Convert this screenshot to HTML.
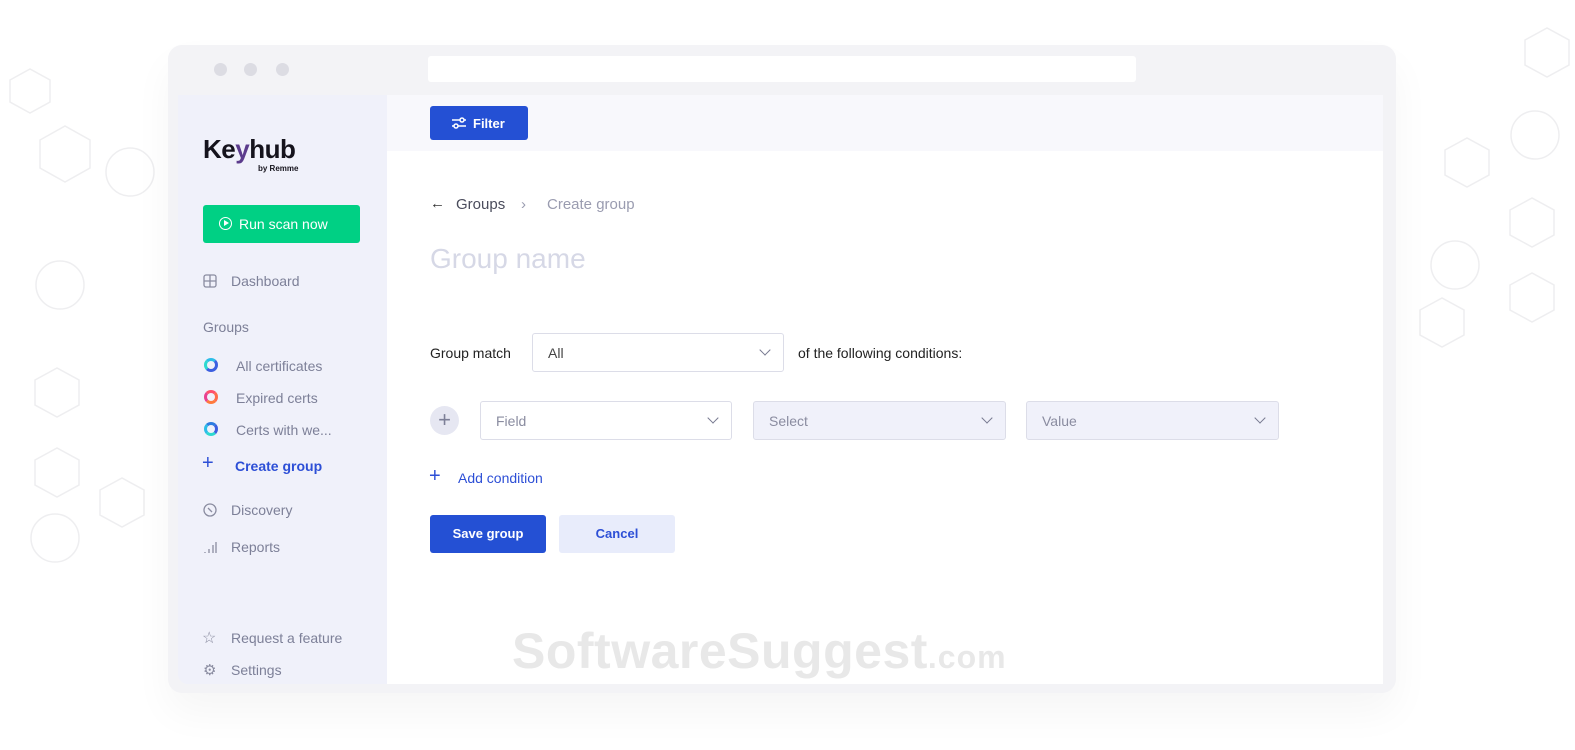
<!DOCTYPE html><html><head><style>
*{margin:0;padding:0;box-sizing:border-box}
body{width:1575px;height:750px;background:#fff;font-family:"Liberation Sans",sans-serif;position:relative;overflow:hidden}
.a{position:absolute}
.frame{left:168px;top:45px;width:1228px;height:648px;background:#f3f3f6;border-radius:14px;box-shadow:0 20px 40px rgba(0,0,0,0.04)}
.dot{width:13px;height:13px;border-radius:50%;background:#dcdce3;top:63px}
.side{left:178px;top:95px;width:209px;height:589px;background:#f0f1fa;border-radius:0 0 0 10px}
.top{left:387px;top:95px;width:996px;height:56px;background:#f8f8fc}
.main{left:387px;top:151px;width:996px;height:533px;background:#fff}
.nav{font-size:14px;color:#7d8098}
.sel{height:39px;border:1px solid #dcdde8;border-radius:3px;font-size:14px;color:#8a8ca0;padding:11px 15px}
.sel.g{background:#f0f1fa}
.chev{position:absolute;right:14px;top:12px;width:8px;height:8px;border-right:1.5px solid #777a90;border-bottom:1.5px solid #777a90;transform:rotate(45deg)}
.ring{width:14px;height:14px;border-radius:50%;border:3px solid}
</style></head><body>
<svg class="a" style="left:0;top:40px" width="170" height="530" fill="none" stroke="#eeeef0" stroke-width="1.5"><circle cx="130" cy="132" r="24"/><circle cx="60" cy="245" r="24"/><circle cx="55" cy="498" r="24"/><path d="M40 100l25-14 25 14v28l-25 14-25-14z M10 40l20-11 20 11v22l-20 11-20-11z M35 340l22-12 22 12v25l-22 12-22-12z M35 420l22-12 22 12v25l-22 12-22-12z M100 450l22-12 22 12v25l-22 12-22-12z"/></svg>
<svg class="a" style="left:1400px;top:20px" width="175" height="380" fill="none" stroke="#eeeef0" stroke-width="1.5"><circle cx="135" cy="115" r="24"/><circle cx="55" cy="245" r="24"/><path d="M125 20l22-12 22 12v25l-22 12-22-12z M45 130l22-12 22 12v25l-22 12-22-12z M110 190l22-12 22 12v25l-22 12-22-12z M110 265l22-12 22 12v25l-22 12-22-12z M20 290l22-12 22 12v25l-22 12-22-12z"/></svg>
<div class="a frame"></div>
<div class="a dot" style="left:214px"></div><div class="a dot" style="left:244px"></div><div class="a dot" style="left:276px"></div>
<div class="a" style="left:428px;top:56px;width:708px;height:26px;background:#fff;border-radius:3px"></div>
<div class="a side"></div><div class="a top"></div><div class="a main"></div>
<div class="a" style="left:203px;top:134px;font-size:26px;font-weight:bold;color:#15131c;letter-spacing:-0.5px">Ke<span style="color:#5b3b8c">y</span>hub</div>
<div class="a" style="left:258px;top:164px;font-size:8px;font-weight:bold;color:#15131c">by Remme</div>
<div class="a" style="left:203px;top:205px;width:157px;height:38px;background:#00d084;border-radius:3px;color:#fff;font-size:14px;padding:11px 0 0 36px">Run scan now</div>
<div class="a" style="left:219px;top:217px;width:13px;height:13px;border:1.5px solid #fff;border-radius:50%"></div>
<div class="a" style="left:224px;top:220px;border-left:5px solid #fff;border-top:3.5px solid transparent;border-bottom:3.5px solid transparent"></div>
<svg class="a" style="left:203px;top:274px" width="14" height="14" fill="none" stroke="#8a8ca0" stroke-width="1.3"><rect x="1" y="1" width="12" height="12" rx="2"/><path d="M1 7h12M7 1v12"/></svg>
<div class="a nav" style="left:231px;top:273px">Dashboard</div>
<div class="a nav" style="left:203px;top:319px">Groups</div>
<div class="a ring" style="left:204px;top:358px;border-color:#2dbde8 #3c5fe0 #3c5fe0 #2dd9d0"></div>
<div class="a nav" style="left:236px;top:358px">All certificates</div>
<div class="a ring" style="left:204px;top:390px;border-color:#ff4f6a #ff6b4a #ff7a3c #e84090"></div>
<div class="a nav" style="left:236px;top:390px">Expired certs</div>
<div class="a ring" style="left:204px;top:422px;border-color:#2d7de0 #3c5fe0 #2dd9d0 #2dbde8"></div>
<div class="a nav" style="left:236px;top:422px">Certs with we...</div>
<div class="a" style="left:202px;top:452px;font-size:20px;color:#2d4fd6">+</div>
<div class="a" style="left:235px;top:458px;font-size:14px;font-weight:bold;color:#2d4fd6">Create group</div>
<svg class="a" style="left:203px;top:503px" width="14" height="14" fill="none" stroke="#8a8ca0" stroke-width="1.3"><circle cx="7" cy="7" r="6"/><path d="M5 5l4 4"/></svg>
<div class="a nav" style="left:231px;top:502px">Discovery</div>
<svg class="a" style="left:203px;top:540px" width="14" height="14" fill="none" stroke="#8a8ca0" stroke-width="1.3"><path d="M2 12v1M6 9v4M10 5v8M13 2v11"/></svg>
<div class="a nav" style="left:231px;top:539px">Reports</div>
<div class="a" style="left:202px;top:628px;font-size:16px;color:#8a8ca0">☆</div>
<div class="a nav" style="left:231px;top:630px">Request a feature</div>
<div class="a" style="left:203px;top:661px;font-size:15px;color:#8a8ca0">⚙</div>
<div class="a nav" style="left:231px;top:662px">Settings</div>
<div class="a" style="left:430px;top:106px;width:98px;height:34px;background:#2450d4;border-radius:3px;color:#fff;font-size:13px;font-weight:bold;padding:10px 0 0 43px">Filter</div>
<svg class="a" style="left:451px;top:116px" width="16" height="14" stroke="#fff" stroke-width="1.5" fill="none"><path d="M1 4h14M1 10h14"/><circle cx="11" cy="4" r="2" fill="#2450d4"/><circle cx="5" cy="10" r="2" fill="#2450d4"/></svg>
<div class="a" style="left:430px;top:195px;font-size:15px;color:#333">←</div>
<div class="a" style="left:456px;top:196px;font-size:15px;color:#4a4c5c">Groups</div>
<div class="a" style="left:521px;top:196px;font-size:15px;color:#9a9cb0">›</div>
<div class="a" style="left:547px;top:196px;font-size:15px;color:#9a9cb0">Create group</div>
<div class="a" style="left:430px;top:243px;font-size:28px;color:#d6d8e6">Group name</div>
<div class="a" style="left:430px;top:345px;font-size:14px;color:#222">Group match</div>
<div class="a sel" style="left:532px;top:333px;width:252px;color:#444">All<div class="chev"></div></div>
<div class="a" style="left:798px;top:345px;font-size:14px;color:#222">of the following conditions:</div>
<div class="a" style="left:430px;top:406px;width:29px;height:29px;border-radius:50%;background:#e6e7f2;color:#7d8098;font-size:22px;text-align:center;line-height:28px">+</div>
<div class="a sel" style="left:480px;top:401px;width:252px">Field<div class="chev"></div></div>
<div class="a sel g" style="left:753px;top:401px;width:253px">Select<div class="chev"></div></div>
<div class="a sel g" style="left:1026px;top:401px;width:253px">Value<div class="chev"></div></div>
<div class="a" style="left:429px;top:465px;font-size:20px;color:#2d4fd6">+</div>
<div class="a" style="left:458px;top:470px;font-size:14px;color:#2d4fd6">Add condition</div>
<div class="a" style="left:430px;top:515px;width:116px;height:38px;background:#2450d4;border-radius:3px;color:#fff;font-size:13px;font-weight:bold;text-align:center;line-height:38px">Save group</div>
<div class="a" style="left:559px;top:515px;width:116px;height:38px;background:#e8ecfb;border-radius:3px;color:#2d4fd6;font-size:13px;font-weight:bold;text-align:center;line-height:38px">Cancel</div>
<div class="a" style="left:512px;top:622px;font-size:50px;font-weight:bold;color:#e8e8e8;letter-spacing:0.5px">SoftwareSuggest<span style="font-size:32px;letter-spacing:1px">.com</span></div>
</body></html>
